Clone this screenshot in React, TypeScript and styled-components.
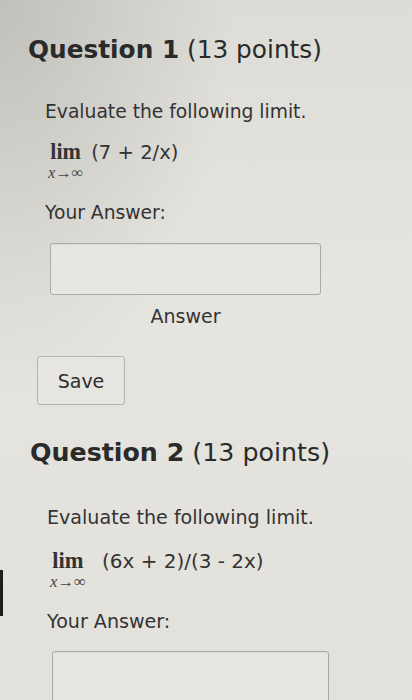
import React from "react";
import styled, { createGlobalStyle } from "styled-components";

const GlobalStyle = createGlobalStyle`
  html, body {
    margin: 0;
    padding: 0;
  }
  body {
    background: #e3e2dd;
    font-family: "DejaVu Sans", Verdana, sans-serif;
    color: #2e2e2e;
  }
`;

const Page = styled.div`
  position: relative;
  width: 412px;
  min-height: 700px;
  overflow: hidden;
  padding-top: 35px;
  box-sizing: border-box;
  background:
    radial-gradient(ellipse at 0% 0%, rgba(150, 150, 145, 0.4), rgba(150, 150, 145, 0) 40%),
    linear-gradient(180deg, #dddcd7 0%, #e5e4df 40%, #e2e1dc 100%);
`;

const Question = styled.section<{ $shift: number; $size: number }>`
  padding-left: ${(p) => 28 + p.$shift}px;
  font-size: ${(p) => p.$size}px;
  & + & {
    margin-top: 33px;
  }
`;

const Heading = styled.h2`
  margin: 0;
  font-size: 1.305em;
  line-height: 30px;
  font-weight: normal;
  color: #2a2a2a;
  white-space: nowrap;

  b {
    font-weight: bold;
  }
`;

const Body = styled.div<{ $top: number }>`
  padding: ${(p) => p.$top}px 0 0 17px;
`;

const Prompt = styled.p`
  margin: 0;
  font-size: 0.985em;
  line-height: 22px;
  color: #333;
`;

const LimitRow = styled.div<{ $top: number }>`
  display: flex;
  align-items: baseline;
  margin-top: ${(p) => p.$top}px;
`;

const LimOp = styled.div`
  display: flex;
  flex-direction: column;
  align-items: center;
  margin-left: 3px;
`;

const LimWord = styled.span`
  font-family: "Liberation Serif", "Times New Roman", serif;
  font-weight: bold;
  font-size: 1.16em;
  line-height: 25px;
  color: #333;
`;

const LimSub = styled.span`
  font-family: "Liberation Serif", "Times New Roman", serif;
  font-size: 0.86em;
  line-height: 17px;
  color: #444;
  white-space: nowrap;

  i {
    font-style: italic;
  }
`;

const Expr = styled.span<{ $gap: number }>`
  font-size: 1.03em;
  margin-left: ${(p) => p.$gap}px;
  color: #333;
  white-space: pre;
`;

const AnswerLabel = styled.p`
  margin: 21px 0 0;
  font-size: 0.985em;
  line-height: 22px;
  color: #333;
`;

const Field = styled.div<{ $top: number; $width: number }>`
  display: flex;
  flex-direction: column;
  align-items: center;
  width: ${(p) => p.$width}px;
  margin: ${(p) => p.$top}px 0 0 5px;
`;

const Input = styled.div`
  align-self: stretch;
  height: 52px;
  box-sizing: border-box;
  border: 1px solid #a9a9a5;
  border-radius: 3px;
  background: #e7e6e2;
  box-shadow: inset 0 1px 1px rgba(0, 0, 0, 0.05);
`;

const InputCaption = styled.span`
  margin-top: 10px;
  font-size: 1em;
  line-height: 22px;
  color: #333;
`;

const SaveButton = styled.button`
  display: block;
  margin: 29px 0 0 9px;
  width: 88px;
  height: 49px;
  padding: 0;
  border: 1px solid #b3b3ae;
  border-radius: 3px;
  background: #e6e5e0;
  font-family: inherit;
  font-size: 1em;
  color: #2e2e2e;
`;

const EdgeMark = styled.div`
  position: absolute;
  left: 0;
  top: 570px;
  width: 3px;
  height: 46px;
  background: #1e1e1e;
`;

const Limit = ({ expr, gap }: { expr: string; gap: number }) => (
  <>
    <LimOp>
      <LimWord>lim</LimWord>
      <LimSub>
        <i>x</i>→∞
      </LimSub>
    </LimOp>
    <Expr $gap={gap}>{expr}</Expr>
  </>
);

export default function App() {
  return (
    <>
      <GlobalStyle />
      <Page>
        <Question $shift={0} $size={19}>
          <Heading>
            <b>Question 1</b> (13 points)
          </Heading>
          <Body $top={36}>
            <Prompt>Evaluate the following limit.</Prompt>
            <LimitRow $top={16}>
              <Limit expr="(7 + 2/x)" gap={8} />
            </LimitRow>
            <AnswerLabel>Your Answer:</AnswerLabel>
            <Field $top={19} $width={271}>
              <Input />
              <InputCaption>Answer</InputCaption>
            </Field>
          </Body>
          <SaveButton>Save</SaveButton>
        </Question>
        <Question $shift={2} $size={19.4}>
          <Heading>
            <b>Question 2</b> (13 points)
          </Heading>
          <Body $top={39}>
            <Prompt>Evaluate the following limit.</Prompt>
            <LimitRow $top={19}>
              <Limit expr="(6x + 2)/(3 - 2x)" gap={16} />
            </LimitRow>
            <AnswerLabel>Your Answer:</AnswerLabel>
            <Field $top={18} $width={277}>
              <Input />
            </Field>
          </Body>
        </Question>
        <EdgeMark />
      </Page>
    </>
  );
}
